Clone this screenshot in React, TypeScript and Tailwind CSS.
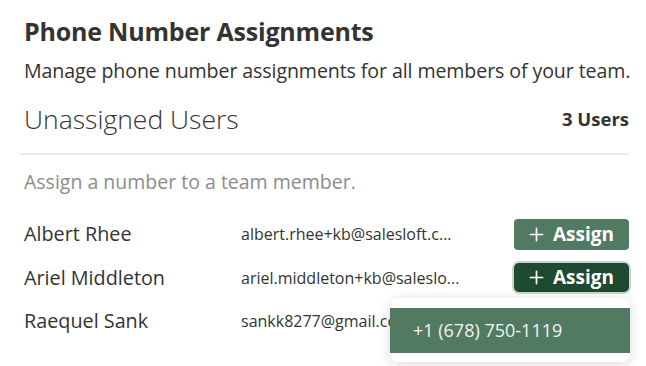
import React from 'react';

const users = [
    { name: 'Albert Rhee', email: 'albert.rhee+kb@salesloft.c...', active: false },
    { name: 'Ariel Middleton', email: 'ariel.middleton+kb@saleslo...', active: true },
    { name: 'Raequel Sank', email: 'sankk8277@gmail.com', active: false },
];

const PlusIcon: React.FC = () => (
    <svg width="15" height="15" viewBox="0 0 16 16" fill="none" stroke="currentColor" strokeWidth="1.8" strokeLinecap="round">
        <path d="M8 1.5v13M1.5 8h13" />
    </svg>
);

export default function App() {
    return (
        <div className="w-[646px] h-[366px] bg-white overflow-hidden text-[#333] font-['Open_Sans','Liberation_Sans',sans-serif]">
            <div className="pl-6 pr-[17px] pt-[16px]">
                <h1 className="text-[25px] font-bold leading-[30px] text-[#333] tracking-[-0.2px]">Phone Number Assignments</h1>
                <p className="mt-[13px] whitespace-nowrap text-[19.6px] leading-[24px] text-[#333] tracking-[-0.1px]">
                    Manage phone number assignments for all members of your team.
                </p>

                <div className="mt-[21px] flex items-center justify-between">
                    <h2 className="text-[26.5px] leading-[30px] font-light text-[#333]">Unassigned Users</h2>
                    <span className="text-[18.5px] font-bold">3 Users</span>
                </div>
                <div className="mt-[19px] -ml-1 h-[2px] bg-[#ececec]" />

                <p className="mt-[15px] text-[19.5px] leading-[24px] text-[#8c8c8c]">Assign a number to a team member.</p>

                <div className="relative mt-[24px] flex flex-col gap-[11.5px]">
                    {users.map((u) => (
                        <div key={u.name} className="flex items-center h-[32px]">
                            <span className="w-[217px] text-[19.8px]">{u.name}</span>
                            <span className="w-[240px] whitespace-nowrap overflow-hidden text-[16px] text-[#333]">{u.email}</span>
                            <div className="ml-auto">
                                {u.active ? (
                                    <button className="flex items-center gap-[9px] h-[29px] w-[115px] justify-center rounded-[5px] bg-[#1e4a31] text-white text-[19px] font-bold ring-[2px] ring-[#c9d6ce]">
                                        <PlusIcon />
                                        Assign
                                    </button>
                                ) : (
                                    <button className="flex items-center gap-[9px] h-[31px] w-[115px] justify-center rounded-[4px] bg-[#527a63] text-white text-[19px] font-bold">
                                        <PlusIcon />
                                        Assign
                                    </button>
                                )}
                            </div>
                        </div>
                    ))}

                    <div className="absolute left-[366px] top-[80px] w-[240px] h-[64px] bg-white rounded-[8px] shadow-[0_2px_12px_rgba(0,0,0,0.15)] pt-[10px]">
                        <div className="h-[45px] bg-[#527a63] text-[#f2f2f2] text-[18px] flex items-center pl-[23px]">
                            +1 (678) 750-1119
                        </div>
                    </div>
                </div>
            </div>
        </div>
    );
}
